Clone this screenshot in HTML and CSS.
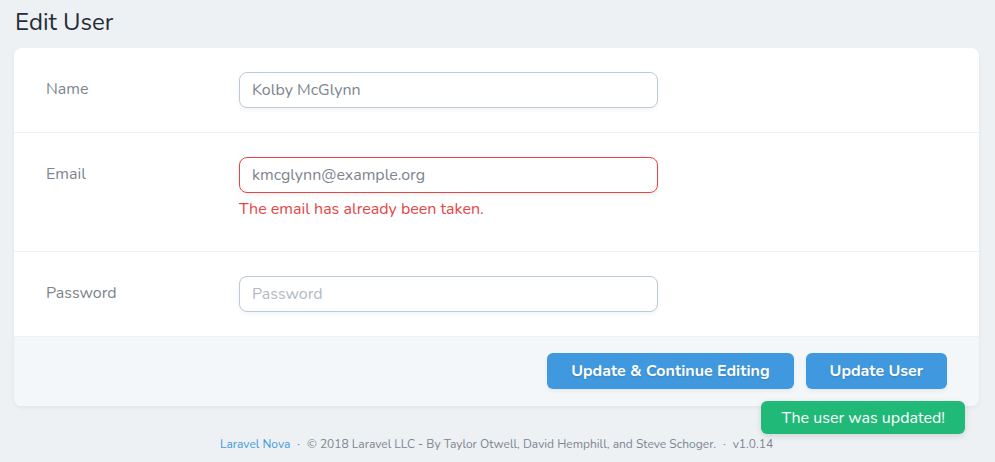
FILE: index.html
```html
<!DOCTYPE html>
<html>
<head>
<meta charset="utf-8">
<link rel="stylesheet" href="styles.css">
</head>
<body>
<div class="page">
  <h1 class="title">Edit User</h1>
  <form class="card">
    <div class="row">
      <div class="label-col"><label class="label">Name</label></div>
      <div class="field-col"><input class="input" type="text" value="Kolby McGlynn"></div>
    </div>
    <div class="row">
      <div class="label-col"><label class="label">Email</label></div>
      <div class="field-col">
        <input class="input input-error" type="text" value="kmcglynn@example.org">
        <p class="error">The email has already been taken.</p>
      </div>
    </div>
    <div class="row">
      <div class="label-col"><label class="label">Password</label></div>
      <div class="field-col"><input class="input" type="password" placeholder="Password"></div>
    </div>
    <div class="actions">
      <button type="button" class="btn">Update &amp; Continue Editing</button>
      <button type="button" class="btn">Update User</button>
    </div>
  </form>
  <p class="footer"><a class="footer-link" href="#">Laravel Nova</a><span class="dot">·</span>© 2018 Laravel LLC - By Taylor Otwell, David Hemphill, and Steve Schoger.<span class="dot">·</span>v1.0.14</p>
</div>
<div class="toast">The user was updated!</div>
</body>
</html>
```

FILE: styles.css
```css
html, body {
  margin: 0;
  padding: 0;
  background: #eef1f4;
  font-family: "Nunito", "Lato", "Open Sans", sans-serif;
  color: #3c4655;
}
.page {
  padding: 0 16px 0 14px;
}
.title {
  margin: 0;
  padding: 6px 0 0 1px;
  height: 48px;
  box-sizing: border-box;
  font-size: 24px;
  font-weight: 400;
  color: #252d37;
  line-height: 32px;
}
.card {
  background: #fff;
  border-radius: 8px;
  box-shadow: 0 2px 4px rgba(0,0,0,0.05);
  overflow: hidden;
}
.row {
  display: flex;
  border-bottom: 1px solid #eef1f4;
}
.label-col {
  width: 20%;
  padding: 24px 32px;
  box-sizing: border-box;
}
.field-col {
  width: 50%;
  padding: 24px 32px;
  box-sizing: border-box;
}
.label {
  display: block;
  padding-top: 7px;
  font-size: 16px;
  line-height: 20px;
  color: #7c858e;
}
.input {
  display: block;
  width: 100%;
  height: 36px;
  box-sizing: border-box;
  border: 1px solid #bacad6;
  border-radius: 8px;
  padding: 0 12px;
  font-family: inherit;
  font-size: 16px;
  color: #7c858e;
  background: #fff;
  box-shadow: 0 2px 4px rgba(0,0,0,0.05);
  outline: none;
}
.input::placeholder { color: #b3bac2; }
.input-error { border-color: #e74444; }
.error {
  margin: 6px 0 8px;
  font-size: 16px;
  line-height: 20px;
  color: #e74444;
}
.actions {
  display: flex;
  justify-content: flex-end;
  gap: 12px;
  padding: 16px 32px 17px;
  background: #f4f7fa;
}
.btn {
  height: 36px;
  padding: 0 24px;
  border: 0;
  border-radius: 6px;
  background: #4099de;
  color: #fff;
  font-family: inherit;
  font-size: 16px;
  font-weight: 700;
  box-shadow: 0 2px 4px rgba(0,0,0,0.06);
  text-shadow: 0 1px 2px rgba(0,0,0,0.15);
}
.footer {
  margin: 0;
  padding-top: 30px;
  text-align: center;
  font-size: 12px;
  line-height: 16px;
  color: #7c858e;
}
.footer-link { color: #4099de; text-decoration: none; }
.dot { margin: 0 7px; }
.toast {
  position: absolute;
  right: 30px;
  top: 401px;
  height: 33px;
  padding: 0 20px;
  display: flex;
  align-items: center;
  background: #21b978;
  color: #fff;
  border-radius: 6px;
  font-family: "Nunito", "Lato", "Open Sans", sans-serif;
  font-size: 16px;
  box-shadow: 0 2px 6px rgba(0,0,0,0.12);
}
```
